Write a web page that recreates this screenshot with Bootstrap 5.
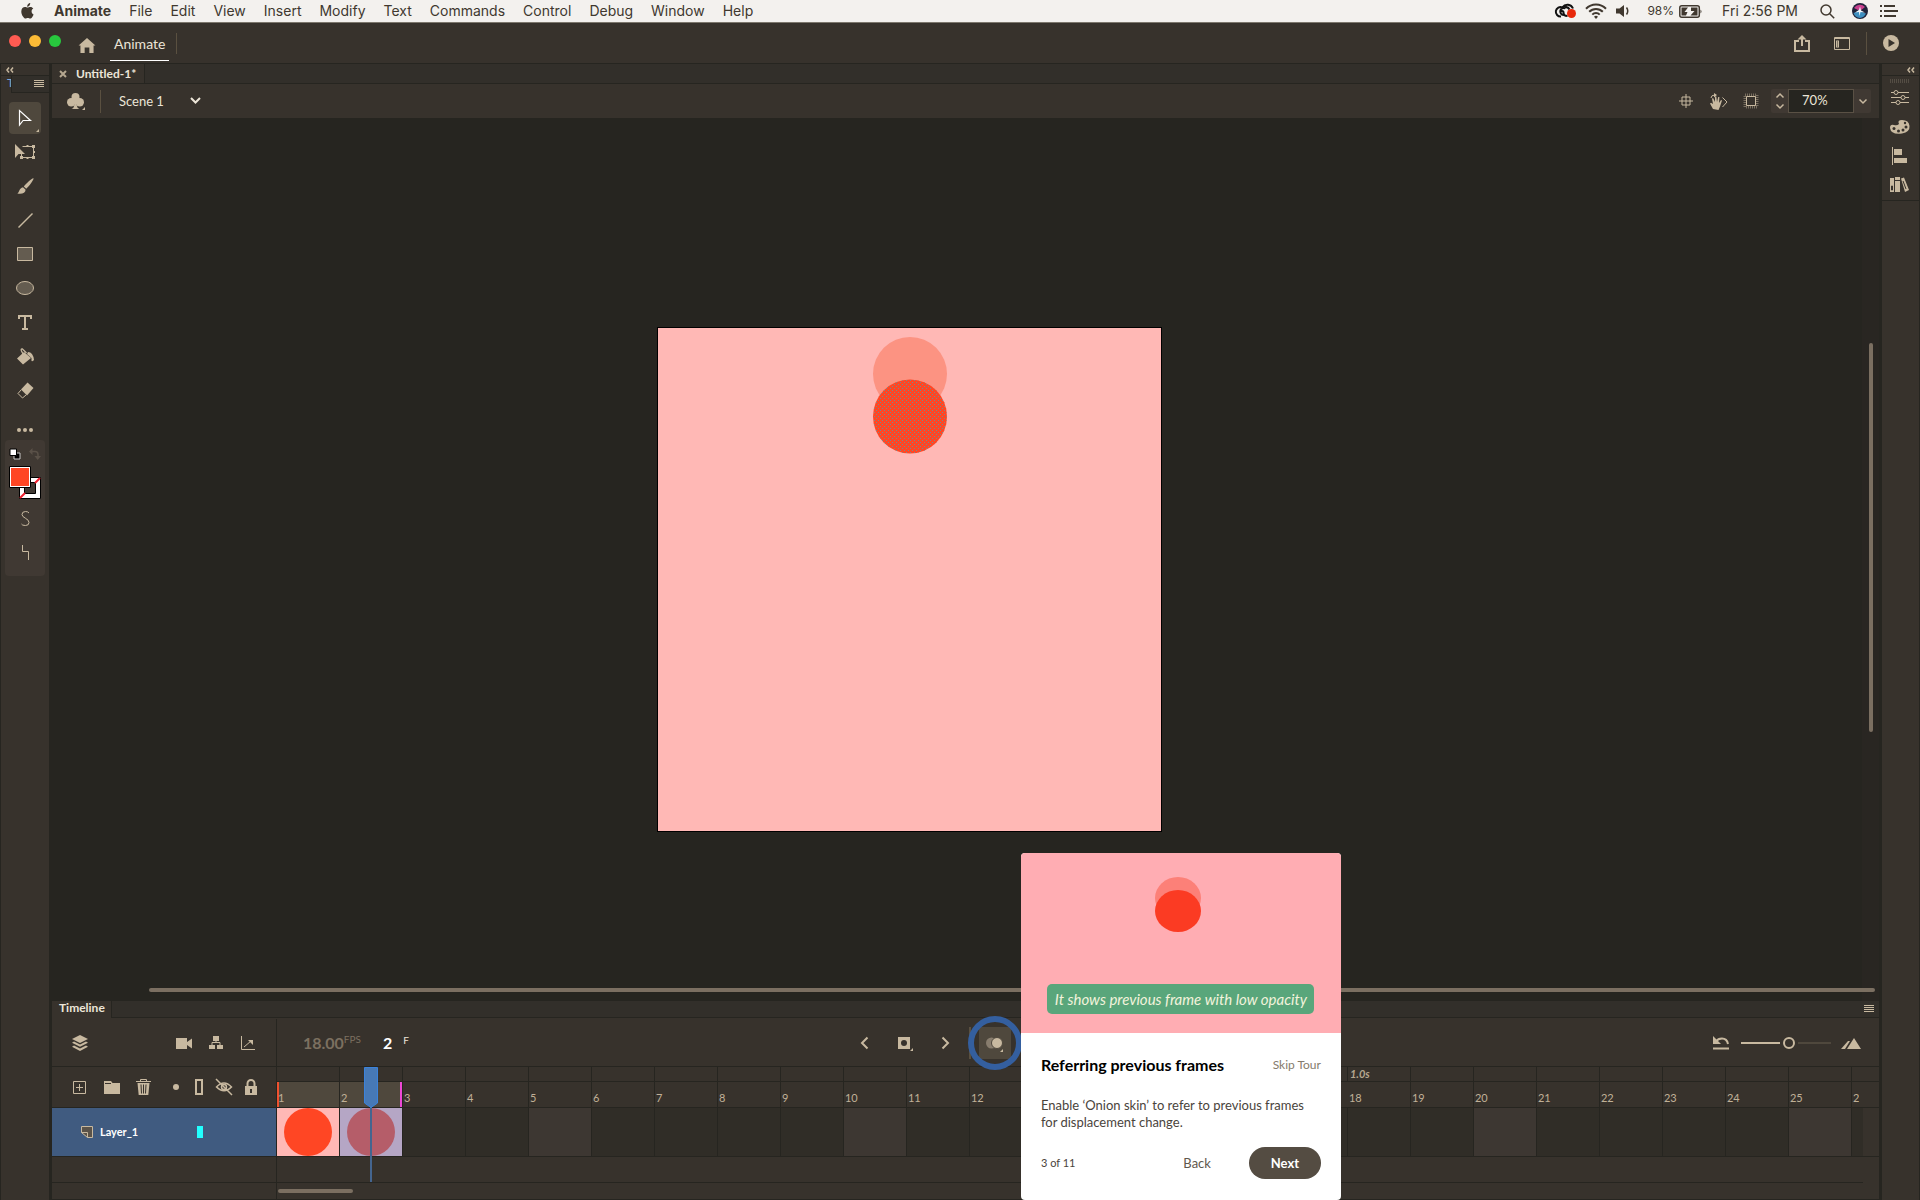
<!DOCTYPE html>
<html lang="en">
<head>
<meta charset="utf-8">
<meta name="viewport" content="width=device-width, initial-scale=1">
<title>Animate</title>
<link href="https://cdn.jsdelivr.net/npm/bootstrap@5.3.0/dist/css/bootstrap.min.css" rel="stylesheet">
<style>
:root{--panel:#37322c;--strip:#322f2a;--edge:#262520;--tan:#c8b9a0;--cream:#ece5d8}
body{height:100vh;min-height:720px;overflow:hidden;background:var(--panel);color:var(--cream);font:13px/20px Lato,"Open Sans",sans-serif}
button,input{font:inherit;color:inherit}
.plain{background:none;border:0;padding:0;display:flex;align-items:center;justify-content:center;color:var(--tan)}
a{color:inherit;text-decoration:none}
svg{display:block;flex:none;overflow:visible}
.ln{fill:none;stroke:currentColor}
/* system menu bar */
.osbar{height:23px;background:#f3f1ee;border-bottom:1px solid #7c776d;color:#40382f;font:14px/18px Inter,Roboto,sans-serif;padding-left:20px;padding-right:22px}
.osmenu{gap:18px;margin-left:19px}
/* window bar */
.winbar{height:41px;border-bottom:1px solid var(--edge);padding:0 21px 0 9px}
.dot{width:12px;height:12px;border-radius:50%}
.modetab{height:28px;padding:0 4px;border-bottom:1px solid #fff;align-self:flex-end;margin:0 0 2px 14px;line-height:22px;font-size:14px}
.vsep{width:1px;background:#5a5040}
/* side columns */
.tools{width:50px;border-left:1px solid var(--edge);border-right:1px solid var(--edge)}
.tool{height:34px;width:32px}
.tool.active{height:32px;background:#4f483d;border-radius:4px;color:#fff;margin-bottom:1px;position:relative}
.collapse-row{height:12px;border-bottom:1px solid var(--edge)}
.toolopts{width:40px;height:136px;background:#403933;border-radius:4px;padding-top:4px}
.dock{width:38px;border-right:1px solid var(--edge)}
.dockset{height:125px;padding-top:3px;border-bottom:1px solid var(--edge)}
.dockset .plain{height:29px;width:36px}
.gutter{width:2px;background:var(--edge)}
/* document */
.tabstrip{height:20px;background:var(--strip);border-bottom:1px solid var(--edge);font-size:12px;font-weight:700;line-height:18px}
.doctab{width:93px;background:var(--panel);border-right:1px solid var(--edge);padding-left:8px}
.editbar{height:34px;padding-left:15px;padding-right:8px}
.zoombox{height:24px;width:100px;background:#403933;border-radius:2px}
.zoombox input{width:66px;height:24px;background:#262520;border:1px solid #5a5145;padding:0 0 3px 13px}
.stage{background:#262520;position:relative;overflow:hidden}
.artboard{position:absolute;left:605px;top:209px;width:505px;height:505px;background:#ffb8b5;border:1px solid #000}
.vgut{position:absolute;right:0;top:0;bottom:0;width:17px;background:#292622}
.vthumb{position:absolute;right:6px;top:225px;width:4px;height:389px;border-radius:2px;background:#7b6f61}
.hthumb{position:absolute;left:97px;right:4px;bottom:9px;height:4px;border-radius:2px;background:#7b6f61}
/* timeline */
.timeline{position:relative}
.tltab{height:17px;background:var(--strip);border-bottom:1px solid var(--edge);font-size:12px;font-weight:700;line-height:14px}
.tltab span{display:block;width:60px;background:var(--panel);border-right:1px solid var(--edge);padding-left:7px;height:17px}
.ctlrow{height:49px;border-bottom:1px solid var(--edge)}
.ctlrow>*{margin-top:2px}
.layercol{width:225px;border-right:1px solid var(--edge);flex:none}
.w32{width:32px}
.fps{width:80px;margin-left:26px;color:#7c7060;font-weight:700;font-size:16px}
.sup{font-size:10px;line-height:12px;font-weight:400;align-self:flex-start}
.onion{width:32px;height:32px;background:#4f483d;position:relative}
.ring{position:absolute;left:-11px;top:-11px;width:54px;height:54px;border:6px solid #345f9f;border-radius:50%}
.zslider{appearance:none;width:90px;height:16px;background:linear-gradient(90deg,var(--tan) 39px,transparent 39px,transparent 57px,#4f483d 57px) center/100% 2px no-repeat;margin:2px 10px 0 12px}
.zslider::-webkit-slider-thumb{appearance:none;width:12px;height:12px;border:2px solid var(--tan);border-radius:50%;background:var(--panel)}
.headrow{height:41px;border-bottom:1px solid var(--edge)}
.seconds{height:15px;border-bottom:1px solid var(--edge)}
.frames{overflow:hidden;display:flex}
.cell63{width:63px;flex:none;border-right:1px solid var(--edge)}
.seconds .cell63{font-size:11px;line-height:14px;font-style:italic;font-weight:700;padding-left:2px;color:#b5a78f}
.nums{margin-right:20px}
.nums .cell63{font-size:11px;line-height:32px;padding-left:1px;color:#c0b198;height:25px}
.nums .lit{background:#4f483d}
.nums .covered{color:transparent;visibility:hidden}
.layerrow{height:49px;border-bottom:1px solid var(--edge)}
.layername{background:#405b80;font-size:11px;font-weight:700;color:#fff}
.cells{margin-right:16px}
.cells .cell63{background:#302d27}
.cells .fifth{background:#3d3732}
.blankrow{height:26px;border-bottom:1px solid var(--edge);margin-right:16px}
.scrollrow{height:17px;border-bottom:1px solid var(--edge)}
.tlthumb{width:75px;height:4px;border-radius:2px;background:#7b6f61;margin:6px 0 0 1px}
.playhead{position:absolute;left:312px;top:66px}
/* coach mark */
.tour{position:absolute;left:969px;bottom:0;width:320px;border-radius:4px;overflow:hidden;background:#fff;color:#4a443c}
.tourart{height:180px;background:#ffadb3}
.caption{background:#59a67b;color:#f3f3dc;border-radius:5px;font-size:15px;font-style:italic;height:30px;line-height:30px;width:267px;margin:0 auto 19px;white-space:nowrap}
.tourbody{height:167px;padding:0 20px}
.tourbody h2{font-size:16px;line-height:20px;color:#000}
.tourbody p{line-height:17px;color:#4a443c}
.nextbtn{width:72px;height:32px;border-radius:16px;background:#544c42;color:#fff;border:0;font-weight:700}
</style>
<script src="https://cdn.jsdelivr.net/npm/bootstrap@5.3.0/dist/js/bootstrap.bundle.min.js"></script>
</head>
<body class="d-flex flex-column">

<header class="osbar d-flex align-items-center flex-shrink-0">
  <svg width="15" height="16" viewBox="0 0 15 16" fill="currentColor"><path d="M10.2 0c.1 1.2-.4 2.100-.9 2.700-.6.7-1.400 1.100-2.200 1.100-.1-1 .4-2 .9-2.600C8.600.500 9.500.100 10.200 0zM13.300 5.500c-1.200.8-1.700 1.700-1.700 2.900 0 1.400.8 2.500 2 3-.3.900-.8 1.800-1.300 2.600-.7 1-1.400 1.600-2.200 1.600-.9 0-1.200-.5-2.300-.5s-1.500.5-2.300.5c-.9 0-1.600-.8-2.300-1.800C2 12.200 1.300 10.300 1.300 8.400c0-2.900 1.800-4.400 3.700-4.400 1 0 1.900.6 2.600.6.6 0 1.600-.7 2.900-.7 1.100 0 2.100.5 2.800 1.600z"/></svg>
  <nav class="osmenu d-flex" aria-label="Menu bar">
    <a href="#" class="fw-bold">Animate</a><a href="#">File</a><a href="#">Edit</a><a href="#">View</a><a href="#">Insert</a><a href="#">Modify</a><a href="#">Text</a><a href="#">Commands</a><a href="#">Control</a><a href="#">Debug</a><a href="#">Window</a><a href="#">Help</a>
  </nav>
  <div class="ms-auto d-flex align-items-center">
    <svg width="22" height="16" viewBox="0 0 22 16" class="ln" stroke-width="2" color="#111"><path d="M6 13.500a4.800 4.800 0 1 1 1.500-9.200A6 6 0 0 1 18 5.500M8.500 12a3.500 3.500 0 1 1 2-6.500M5.500 9.500a1.500 1.500 0 0 1 3 0c0 2 1.500 3.500 4 3.500M9.500 4.500a4 4 0 0 1 5 2"/><circle cx="16.500" cy="10.500" r="4.500" fill="#e8290b" stroke="none"/></svg>
    <svg class="ms-2" width="22" height="16" viewBox="0 0 22 16"><g class="ln" stroke-width="2"><path d="M1 5.800a14 14 0 0 1 20 0M4.200 8.800a9.600 9.600 0 0 1 13.600 0M7.300 11.600a5.200 5.200 0 0 1 7.400 0"/></g><path fill="currentColor" d="M11 16l-2-2.300a3 3 0 0 1 4 0z"/></svg>
    <svg style="margin-left:9px" width="14" height="14" viewBox="0 0 14 14"><path fill="currentColor" d="M0 4.500h3.500L8 1v12L3.500 9.500H0z"/><path class="ln" stroke-width="1.500" d="M10.500 3.500q2.500 3.500 0 7"/></svg>
    <span style="margin-left:17px;font-size:12px">98%</span>
    <svg style="margin-left:5px" width="24" height="13" viewBox="0 0 24 13"><rect class="ln" stroke-width="1.500" x=".8" y=".8" width="19.500" height="11.400" rx="2"/><path fill="currentColor" d="M2.500 2.500h6.500L5.500 7h3l-1.500 3.500H2.500zM12 2.500h6.500v8h-7L15.500 6h-3.500zM21.500 4.500q2 2 0 4z"/></svg>
    <span style="margin-left:19px">Fri 2:56 PM</span>
    <svg style="margin-left:22px" width="15" height="15" viewBox="0 0 15 15" class="ln" stroke-width="1.500"><circle cx="6" cy="6" r="5"/><path d="M9.700 9.700l4.500 4.500"/></svg>
    <svg style="margin-left:17px" width="16" height="16" viewBox="0 0 16 16"><circle cx="8" cy="8" r="8" fill="#20233a"/><path d="M2 5a7 7 0 0 1 11-1L8 8z" fill="#c8408f"/><path d="M1.500 10q4-1 6.500-4 2 4 6 4.500-2 4-6 4.500-5-.500-6.500-5z" fill="#3d8fc0"/><path d="M8 3.500l1 4 4 2-4.500-.5L7.500 13 7 9l-4 .5 4-2.500z" fill="#f4f8fc"/></svg>
    <svg style="margin-left:12px" width="18" height="12" viewBox="0 0 18 12" fill="currentColor"><path d="M0 0h2v2H0zM4 0h11v2H4zM0 5h2v2H0zM4 5h14v2H4zM0 10h2v2H0zM4 10h12v2H4z"/></svg>
  </div>
</header>

<div class="winbar d-flex align-items-center flex-shrink-0">
  <div class="d-flex gap-2 mb-1"><span class="dot" style="background:#ff5b52"></span><span class="dot" style="background:#fcbb36"></span><span class="dot" style="background:#28c83e"></span></div>
  <button class="plain pt-1" style="margin-left:17px" aria-label="Home"><svg width="18" height="15" viewBox="0 0 18 16" fill="currentColor"><path d="M9 0l9 8h-2v8h-4.500v-6h-5v6H2V8H0z"/></svg></button>
  <a href="#" class="modetab">Animate</a>
  <span class="vsep" style="height:21px;margin-left:7px"></span>
  <button class="plain ms-auto" aria-label="Share"><svg width="16" height="17" viewBox="0 0 16 17"><path class="ln" stroke-width="2" d="M5 6H1v10h14V6h-4M8 11V3"/><path fill="currentColor" d="M3.500 4.500L8 0l4.500 4.500z"/></svg></button>
  <button class="plain ms-4" aria-label="Workspace"><svg width="16" height="13" viewBox="0 0 16 13"><path class="ln" d="M.5.500h15v12H.500zM.500 1.500h15"/><path fill="currentColor" d="M2 3.500h3v7H2z"/><path stroke="#37322c" stroke-dasharray="1 1" d="M3.500 4.500v5"/></svg></button>
  <span class="vsep ms-3" style="height:23px"></span>
  <button class="plain ms-3" aria-label="Play"><svg width="16" height="16" viewBox="0 0 16 16"><circle cx="8" cy="8" r="8" fill="currentColor"/><path d="M5.500 4v8L12 8z" fill="#37322c"/></svg></button>
</div>

<div class="d-flex flex-grow-1" style="min-height:0">
  <aside class="tools d-flex flex-column align-items-center flex-shrink-0" aria-label="Tools">
    <div class="collapse-row w-100 d-flex align-items-center"><button class="plain" style="margin-left:5px" aria-label="Collapse tools"><svg width="8" height="6" viewBox="0 0 8 6" class="ln" stroke-width="1.500"><path d="M3 .500L1 3l2 2.500M7 .500L5 3l2 2.500"/></svg></button></div>
    <div class="w-100 d-flex" style="height:17px;margin-bottom:9px"><span style="width:10px;padding-left:6px;overflow:hidden;font-size:12px;line-height:14px;color:#7da7d8">T</span><div class="flex-grow-1 d-flex justify-content-end align-items-center" style="background:var(--strip);border-left:1px solid var(--edge);border-bottom:1px solid var(--edge);padding-right:5px"><svg width="10" height="8" viewBox="0 0 10 8" class="ln" color="#c8b9a0"><path d="M0 .500h10M0 2.500h10M0 4.500h10M0 6.500h10"/></svg></div></div>
    <button class="plain tool active" aria-label="Selection"><svg width="14" height="18" viewBox="0 0 14 18" class="ln" stroke-width="1.200"><path d="M1.500 1.500v14.500l3.600-4.500h7.400z"/></svg><svg style="position:absolute;right:2px;bottom:2px" width="3" height="3" fill="#c8b9a0"><path d="M3 0v3H0z"/></svg></button>
    <button class="plain tool" aria-label="Free transform"><svg width="20" height="16" viewBox="0 0 20 16"><path class="ln" d="M7.500 2.500h11v11h-12V10"/><path fill="currentColor" d="M0 0v14l3.500-4H10zM17 1h3v3h-3zM17 12h3v3h-3zM5 12h3v3H5zM11.500 1h2v2h-2zM11.500 13h2v2h-2zM18 7h2v2h-2z"/></svg></button>
    <button class="plain tool" aria-label="Brush"><svg width="17" height="17" viewBox="0 0 17 17" fill="currentColor"><path d="M16.500.300c.8 1-5 8.700-7.300 10.400L6.800 8.500C8.500 6.200 15.500-.500 16.500.300zM6 9.300l2.600 2.400C8.500 15 5 16.500.300 15.500 2.500 14.500 2 10 6 9.300z"/></svg></button>
    <button class="plain tool" aria-label="Line"><svg width="15" height="15" class="ln" stroke-width="1.500"><path d="M.500 14.500l14-14"/></svg></button>
    <button class="plain tool" aria-label="Rectangle"><svg width="16" height="14"><path d="M.5.500h15v13H.500z" fill="#645c50" stroke="currentColor"/></svg></button>
    <button class="plain tool" aria-label="Oval"><svg width="18" height="14"><ellipse cx="9" cy="7" rx="8.500" ry="6.500" fill="#645c50" stroke="currentColor"/></svg></button>
    <button class="plain tool" aria-label="Text"><svg width="14" height="15" viewBox="0 0 14 15" class="ln" stroke-width="2"><path d="M1 4V1h12v3M7 1v13M4 14h6"/></svg></button>
    <button class="plain tool" aria-label="Paint bucket"><svg width="17" height="17" viewBox="0 0 17 17"><path fill="currentColor" d="M7 4l7 6-8 6.500L0 10.500zM11 4q5 0 6 8-1 1.500-2.500 1V10L10 6z"/><path class="ln" stroke-width="1.300" d="M7 8L4.500 3Q3.500.500 5.500 1l4 4"/></svg></button>
    <button class="plain tool" aria-label="Eraser"><svg width="17" height="17" viewBox="0 0 17 17"><path fill="currentColor" d="M10.500.500l6 5.500-6.500 7.500-6-6z"/><path class="ln" d="M4 8l-3 3.500 4.500 4.500L9 13"/></svg></button>
    <button class="plain" style="height:33px;padding-top:12px" aria-label="More tools"><svg width="16" height="4" fill="currentColor"><circle cx="2" cy="2" r="2"/><circle cx="8" cy="2" r="2"/><circle cx="14" cy="2" r="2"/></svg></button>
    <div class="toolopts d-flex flex-column align-items-center">
      <div class="d-flex align-items-center justify-content-between" style="width:32px;height:20px;margin-bottom:2px">
        <svg width="12" height="12"><path d="M5 5h6v6H5z" fill="#000" stroke="#c9c9c9"/><path d="M1 1h6.500v6.500H1z" fill="#fff" stroke="#000"/></svg>
        <svg width="12" height="12" color="#5a5148"><path class="ln" stroke-width="1.500" d="M2 3.500h4q3 0 3 3V9"/><path fill="currentColor" d="M3.500 0v7L0 3.500zM5.500 8H12l-3.300 4z"/></svg>
      </div>
      <svg width="32" height="34" viewBox="0 0 32 34"><path d="M10.500 11.500h21v21h-21z" fill="#fff" stroke="#000"/><path d="M15.500 16.500h11v11h-11z" fill="#403933" stroke="#000"/><path d="M11 32l5-5M26 17l5-5" stroke="#f02030" stroke-width="2"/><path d="M.5.500h21v21H.500z" fill="#fff" stroke="#000"/><path d="M2 2h18v18H2z" fill="#ff4624"/></svg>
      <button class="plain" style="height:36px" aria-label="Smooth"><svg width="9" height="15" class="ln"><path d="M8 2Q7 .500 4.500.500 1 .500 1 3.500q0 2 3.500 3.800T8 11.500q0 3-3.500 3Q1 14.500.500 13"/></svg></button>
      <button class="plain" style="height:32px" aria-label="Straighten"><svg width="7" height="15" class="ln"><path d="M.500 0v6.500h6V15"/></svg></button>
    </div>
  </aside>
  <span class="gutter"></span>

  <main class="flex-grow-1 d-flex flex-column" style="min-width:0">
    <div class="tabstrip d-flex flex-shrink-0"><a href="#" class="doctab d-flex align-items-center"><svg width="6" height="6" class="ln me-2" color="#b5a78f" stroke-width="2"><path d="M0 0l6 6M6 0L0 6"/></svg><span style="margin-left:2px">Untitled-1*</span></a></div>
    <div class="editbar d-flex align-items-center flex-shrink-0">
      <button class="plain" aria-label="Symbols"><svg width="18" height="17" viewBox="0 0 18 17" fill="currentColor"><circle cx="8.500" cy="4" r="4"/><circle cx="4.200" cy="9.300" r="4.200"/><circle cx="12.800" cy="9.300" r="4.200"/><path d="M7.300 7h2.400v5q.3 3 2.800 4h-8q2.500-1 2.800-4zM18 14v3h-3z"/></svg></button>
      <span class="vsep" style="height:23px;margin-left:15px"></span>
      <button class="plain" style="margin-left:18px;color:var(--cream);width:82px;justify-content:space-between;font-size:13px">Scene 1 <svg width="11" height="6" class="ln" stroke-width="2"><path d="M1 0l4.500 4.500L10 0"/></svg></button>
      <button class="plain ms-auto" aria-label="Center stage"><svg width="14" height="14" class="ln"><path d="M0 7h14M7 0v14M3 3h8v8H3z"/></svg></button>
      <button class="plain" style="margin-left:17px" aria-label="Rotate stage"><svg width="18" height="17" viewBox="0 0 18 17"><path fill="currentColor" d="M3 16l-3-5.500 1-.8 2 1.300L2 5.500l1.200-.3L5 9V3.500h1.300L7 9l1.200-5h1.200l-.4 6 2-3 1 .5-2 6-1.500 3.500z"/><path class="ln" d="M12.500 4.500L17 9l-4.500 5M1 5q0-3 4-3"/><path fill="currentColor" d="M4 0l3 2-3 2.500z"/></svg></button>
      <button class="plain" style="margin-left:15px" aria-label="Clip content"><svg width="16" height="16"><path d="M2 2h12v12H2z" fill="none" stroke="#796f60" stroke-width="3" stroke-dasharray="1 1"/><path class="ln" d="M3.500 3.500h9v9h-9z"/></svg></button>
      <div class="zoombox d-flex" style="margin-left:12px">
        <div class="d-flex flex-column justify-content-between py-1" style="width:17px"><button class="plain" aria-label="Zoom in"><svg width="8" height="5" class="ln" stroke-width="1.500"><path d="M.500 4.500L4 1l3.500 3.500"/></svg></button><button class="plain" aria-label="Zoom out"><svg width="8" height="5" class="ln" stroke-width="1.500"><path d="M.500.500L4 4 7.500.500"/></svg></button></div>
        <input type="text" value="70%" aria-label="Zoom"><button class="plain flex-grow-1" aria-label="Zoom presets"><svg width="8" height="5" class="ln" stroke-width="1.500"><path d="M.500.500L4 4 7.500.500"/></svg></button>
      </div>
    </div>

    <section class="stage flex-grow-1" aria-label="Stage">
      <span class="vgut"></span>
      <div class="artboard"><svg width="503" height="503"><defs><pattern id="mesh" width="4" height="4" patternUnits="userSpaceOnUse"><path fill="#7a8a8a" d="M0 0h1v1H0zM2 2h1v1H2z"/></pattern></defs><circle cx="252" cy="46" r="37" fill="#fc9382"/><circle cx="252" cy="88.500" r="37" fill="#ff4624"/><circle cx="252" cy="88.500" r="37" fill="url(#mesh)"/></svg></div>
      <span class="vthumb"></span><span class="hthumb"></span>
    </section>

    <section class="timeline flex-shrink-0" aria-label="Timeline">
      <div class="tltab d-flex justify-content-between"><span>Timeline</span><svg style="margin:4px 5px 0 0" width="10" height="8" class="ln" color="#c8b9a0"><path d="M0 .500h10M0 2.500h10M0 4.500h10M0 6.500h10"/></svg></div>
      <div class="ctlrow d-flex align-items-center">
        <div class="layercol h-100 d-flex align-items-center" style="padding-right:12px;padding-left:20px">
          <button class="plain me-auto" aria-label="Layers"><svg width="16" height="16" viewBox="0 0 16 16" fill="currentColor"><path d="M8 0l8 4-8 4-8-4zM2 6.500l6 3 6-3 2 1.200-8 4-8-4zM2 10.500l6 3 6-3 2 1.200L8 16l-8-4.300z"/></svg></button>
          <button class="plain w32" aria-label="Camera"><svg width="16" height="11" fill="currentColor"><path d="M0 0h11v4l5-3.500v10L11 7v4H0z"/></svg></button>
          <button class="plain w32" aria-label="Parenting"><svg width="14" height="14"><path fill="currentColor" d="M4 0h6v5H4zM0 9h6v4H0zM8 9h6v4H8z"/><path class="ln" d="M7 4v3M3 9.500v-3h8v3"/></svg></button>
          <button class="plain w32" aria-label="Graph"><svg width="14" height="14"><path class="ln" d="M.500 0v13.500H14M3 11l7-6"/><path fill="currentColor" d="M7 4h5v5z"/></svg></button>
        </div>
        <div class="fps d-flex">18.00<span class="sup">FPS</span></div>
        <b class="fs-6" style="color:#fff">2</b><span class="sup" style="margin:16px 0 0 11px">F</span>
        <div class="d-flex align-items-center" style="margin-left:443px">
          <button class="plain" style="width:26px" aria-label="Previous"><svg width="7" height="12" class="ln" stroke-width="2"><path d="M6.500.500L1 6l5.500 5.500"/></svg></button>
          <button class="plain" style="width:55px" aria-label="Insert keyframe"><svg width="14" height="14"><path fill="currentColor" d="M0 1h12v12H0zM15 12v3h-3z"/><circle cx="6" cy="7" r="3" fill="#37322c"/></svg></button>
          <button class="plain" style="width:26px" aria-label="Next"><svg width="7" height="12" class="ln" stroke-width="2"><path d="M.500.500L6 6 .500 11.500"/></svg></button>
        </div>
        <span class="vsep" style="height:32px;width:2px;margin:2px 8px 0 10px"></span>
        <button class="plain onion" aria-label="Onion skin"><svg width="17" height="12"><circle cx="5.500" cy="6" r="5.500" fill="#887d6e"/><circle cx="11" cy="6" r="5.500" fill="currentColor" stroke="#4f483d"/><path fill="currentColor" d="M17 12v3h-3z"/></svg><span class="ring"></span></button>
        <button class="plain ms-auto" aria-label="Reset zoom"><svg width="16" height="14"><path class="ln" stroke-width="2" d="M0 12.500h16M15 8q-1-5.500-6-5.500-4 0-6 3"/><path fill="currentColor" d="M0 0v8h8z"/></svg></button>
        <input class="zslider" type="range" min="0" max="100" value="54" aria-label="Timeline zoom">
        <svg style="margin-right:18px" width="20" height="11" fill="#c8b9a0"><path d="M13 0l7 11H6zM7 3h2L4 11H0z"/></svg>
      </div>
      <div class="headrow d-flex">
        <div class="layercol h-100 d-flex align-items-center" style="padding-left:12px">
          <button class="plain w32" aria-label="New layer"><svg width="13" height="13" class="ln"><path d="M.500.500h12v12H.500zM3 6.500h7M6.500 3v7"/></svg></button>
          <button class="plain w32" aria-label="New folder"><svg width="16" height="13" fill="currentColor"><path d="M0 0h7l1.500 2H16v11H0z"/><path d="M1 2.500h6" stroke="#37322c"/></svg></button>
          <button class="plain w32" aria-label="Delete"><svg width="15" height="16"><path fill="currentColor" d="M1.500 4h12l-1.200 12H2.700z"/><path class="ln" d="M0 2.500h15M4.500 2.500v-2h6v2"/><path stroke="#37322c" d="M5 5.500l.5 9M7.500 5.500v9M10 5.500l-.5 9"/></svg></button>
          <button class="plain w32" aria-label="Highlight"><svg width="6" height="6" fill="currentColor"><circle cx="3" cy="3" r="3"/></svg></button>
          <button class="plain" style="width:14px" aria-label="Outline"><svg width="8" height="16" class="ln" stroke-width="2"><path d="M1 1h6v14H1z"/></svg></button>
          <button class="plain" style="width:37px" aria-label="Hide"><svg width="16" height="16" class="ln" stroke-width="1.500"><path d="M.500 8Q8 0 15.500 8 8 15.500.500 8zM0 0l16 16"/><circle cx="8" cy="8" r="2.500"/></svg></button>
          <button class="plain" style="width:16px" aria-label="Lock"><svg width="12" height="16"><path fill="currentColor" d="M0 7h12v9H0z"/><path class="ln" stroke-width="2" d="M2.500 8V4.500a3.500 3.500 0 0 1 7 0V8"/><path fill="#37322c" d="M5 10h2v4H5z"/></svg></button>
        </div>
        <div class="flex-grow-1" style="min-width:0"><div class="seconds frames" id="seconds"></div><div class="nums frames" id="nums"></div></div>
      </div>
      <div class="layerrow d-flex">
        <div class="layercol layername d-flex align-items-center" style="padding-left:29px"><svg width="12" height="12" color="#c8b9a0"><path fill="#5b5349" stroke="currentColor" d="M.500.500h11v11h-5l-6-5zM.500 6.500h6v5"/></svg><span style="margin-left:7px;width:97px">Layer_1</span><span style="width:6px;height:12px;background:#2ff"></span></div>
        <div class="frames cells flex-grow-1" id="cells" style="min-width:0"></div>
      </div>
      <div class="blankrow d-flex"><div class="layercol"></div></div>
      <div class="scrollrow d-flex"><div class="layercol"></div><div class="tlthumb"></div></div>
      <svg class="playhead" width="14" height="116"><path d="M7 38v77" stroke="#44658f" stroke-width="2"/><path d="M.500.500h13v35.500L7 40.500.500 36z" fill="#4779b6" stroke="#3b83dc"/></svg>

      <div class="tour" role="dialog" aria-labelledby="tourTitle">
        <div class="tourart d-flex flex-column justify-content-between text-center"><svg style="margin:24px auto 0" width="46" height="55" viewBox="0 0 46 55"><ellipse cx="20" cy="21" rx="23" ry="21" fill="#fc8078"/><ellipse cx="20" cy="34" rx="23" ry="21" fill="#fb3b23"/></svg><div class="caption">It shows previous frame with low opacity</div></div>
        <div class="tourbody d-flex flex-column">
          <div class="d-flex justify-content-between" style="margin-top:22px"><h2 class="fw-bold m-0" id="tourTitle">Referring previous frames</h2><a href="#" style="font-size:12px;color:#857b6d">Skip Tour</a></div>
          <p style="margin:22px 0 16px">Enable ‘Onion skin’ to refer to previous frames<br>for displacement change.</p>
          <div class="d-flex align-items-center"><small class="me-auto" style="font-size:11px">3 of 11</small><button class="plain" style="color:#5f574c;margin-right:38px;font-size:13px">Back</button><button class="nextbtn">Next</button></div>
        </div>
      </div>
    </section>
  </main>
  <span class="gutter" style="width:3px"></span>

  <aside class="dock flex-shrink-0" aria-label="Panels">
    <div class="collapse-row d-flex justify-content-end pe-1"><button class="plain" aria-label="Expand panels"><svg width="8" height="6" viewBox="0 0 8 6" class="ln" stroke-width="1.500"><path d="M3 .500L1 3l2 2.500M7 .500L5 3l2 2.500"/></svg></button></div>
    <div class="dockset">
      <svg class="mx-auto" width="20" height="4"><path d="M0 2h20" stroke="#544d44" stroke-width="4" stroke-dasharray="1 1"/></svg>
      <button class="plain" aria-label="Properties"><svg width="18" height="16" class="ln" viewBox="0 0 18 16"><path d="M0 2.500h3M7 2.500h11M0 7.500h10M14 7.500h4M0 12.500h5M9 12.500h9"/><circle cx="5" cy="2.500" r="2"/><circle cx="12" cy="7.500" r="2"/><circle cx="7" cy="12.500" r="2"/></svg></button>
      <button class="plain" aria-label="Color"><svg width="20" height="14" viewBox="0 0 20 14"><path fill="currentColor" d="M0 8Q0 4 4 5q3 1 5-1Q7 0 12 0q7 0 7.500 6T12 13.500Q1 15 0 8z"/><g fill="#37322c"><circle cx="4" cy="8.500" r="1.500"/><circle cx="8.500" cy="11" r="1.500"/><circle cx="13" cy="10" r="1.500"/><circle cx="16" cy="7" r="1.500"/><circle cx="15" cy="3" r="1.200"/></g></svg></button>
      <button class="plain" aria-label="Align"><svg width="16" height="18" fill="currentColor"><path d="M0 0h1v18H0zM2 2h8v6H2zM2 11h13v5H2z"/></svg></button>
      <button class="plain" aria-label="Library"><svg width="19" height="15"><path fill="currentColor" d="M0 1h4v14H0zM5 0h5v15H5zM11 1.500l3-1 5 12.500-4 2z"/><path class="ln" color="#37322c" d="M1.500 9h1v4h-1zM5 3.500h5M13 4l3 8"/></svg></button>
    </div>
  </aside>
</div>

<script>
// Frame ruler and cells: 26 frames, every fifth one shaded, 18 frames per second.
const fill = (id, make) => document.getElementById(id).innerHTML = Array.from({length: 26}, (_, i) => make(i + 1)).join('');
const disc = (bg, fg) => `<div class="cell63" style="background:${bg}"><svg class="mx-auto" width="50" height="48"><circle cx="25" cy="24" r="24" fill="${fg}"/></svg></div>`;
fill('seconds', n => `<div class="cell63">${n === 18 ? '1.0s' : ''}</div>`);
// Numbers that lie under the open tour card are hidden.
fill('nums', n => `<div class="cell63${n < 3 ? ' lit' : ''}${n > 12 && n < 18 ? ' covered' : ''}"${n === 1 ? ' style="box-shadow:inset 2px 0 #f0512f"' : n === 2 ? ' style="box-shadow:inset -2px 0 #ec48d6"' : ''}>${n}</div>`);
fill('cells', n => n === 1 ? disc('#ffb8b5', '#ff4624') : n === 2 ? disc('#b5a6c5', '#b55d69') : `<div class="cell63${n % 5 ? '' : ' fifth'}"></div>`);
</script>
</body>
</html>
